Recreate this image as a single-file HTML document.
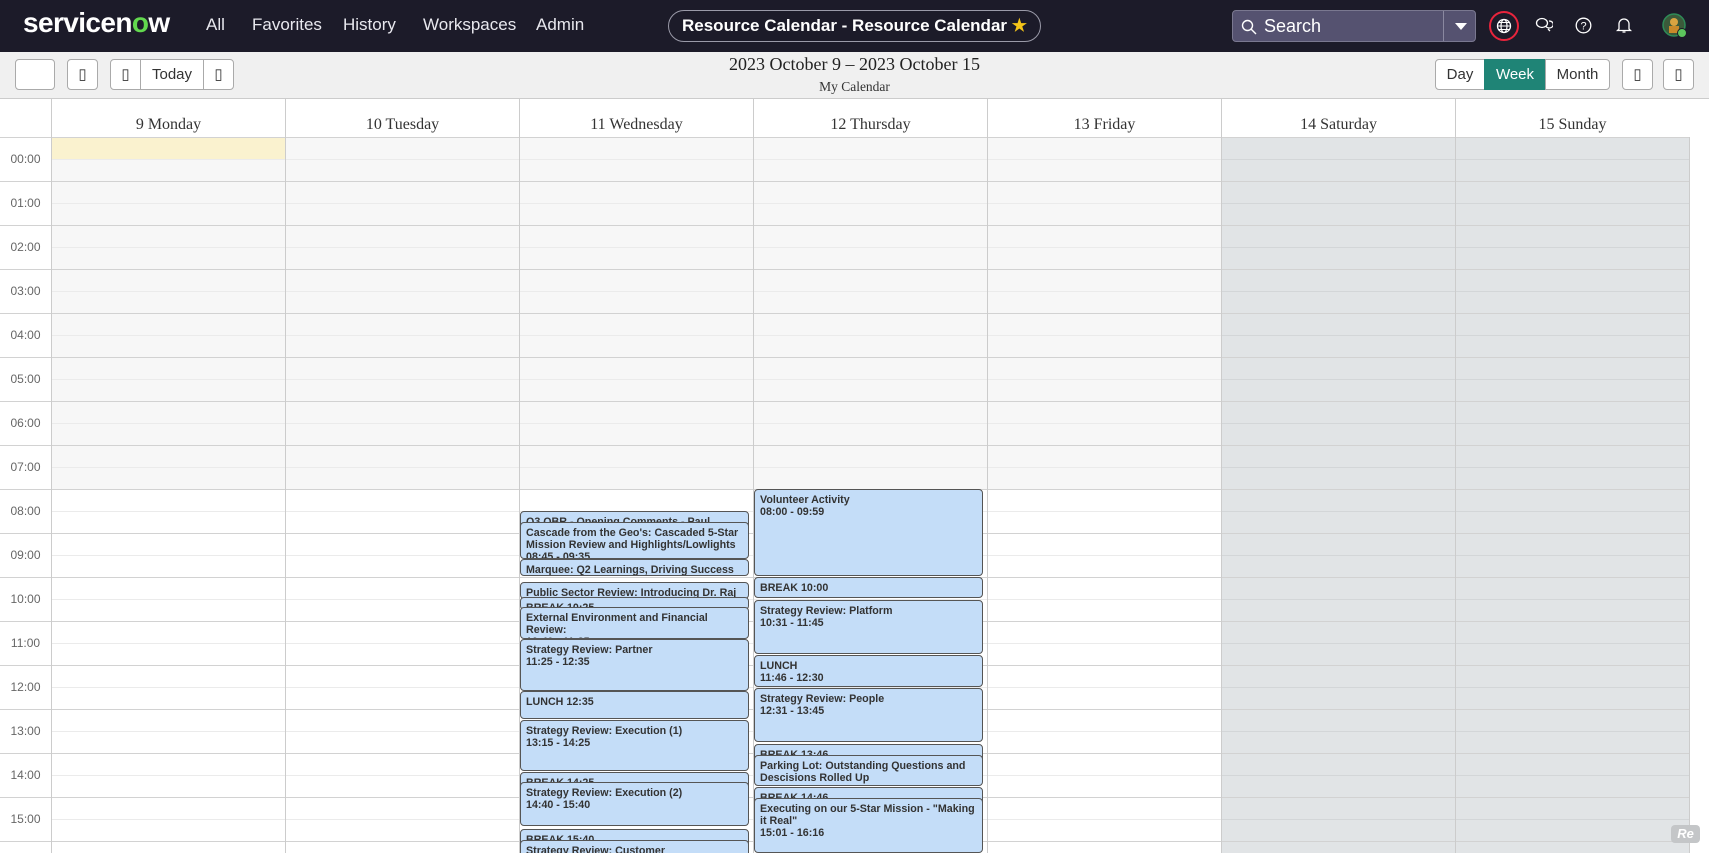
<!DOCTYPE html>
<html style="overflow:hidden"><head><meta charset="utf-8"><style>
*{box-sizing:border-box;margin:0;padding:0}
html,body{width:1709px;height:853px;overflow:hidden}
body{background:#fff;font-family:"Liberation Sans",sans-serif;position:relative}
#wrap{position:absolute;left:0;top:0;width:1709px;height:853px;overflow:hidden}
.hdr{position:absolute;left:0;top:0;width:1709px;height:52px;background:#1c1b29;color:#fff}
.hdr .nav{position:absolute;top:15px;font-size:17px;color:#e8e8ee}
.logo{position:absolute;left:23px;top:7px;font-size:28px;font-weight:bold;letter-spacing:-0.6px;color:#fff}
.pill{position:absolute;left:668px;top:10px;width:373px;height:32px;border:1px solid #9a9aa8;border-radius:16px;text-align:center;font-weight:bold;font-size:17px;line-height:30px}
.search{position:absolute;left:1232px;top:10px;width:244px;height:32px;background:#555270;border:1px solid #7a7890;border-radius:4px}
.tb{position:absolute;left:0;top:52px;width:1709px;height:47px;background:#f0f0f0;border-bottom:1px solid #ccc}
.btn{position:absolute;top:7px;height:31px;border:1px solid #aaa;background:#fff;border-radius:4px;font-size:15px;line-height:29px;text-align:center;color:#333}
.colh{position:absolute;top:99px;height:38px;border-left:1px solid #ccc;font-family:"Liberation Serif",serif;font-size:16px;color:#333;text-align:center;line-height:52px}
.col{position:absolute;top:137px;height:716px;border-left:1px solid #ccc}
.tl{position:absolute;left:0;width:51px;text-align:center;font-size:12px;color:#666}
.ev{position:absolute;background:#c4ddf8;border:1px solid #555;border-radius:4px;padding:4px 4px 4px 5px;font-size:10.7px;font-weight:bold;color:#333;line-height:12px;overflow:hidden}
</style></head><body><div id="wrap">
<div class="hdr">
<div class="logo">servicen<span style="color:#62d84e">o</span>w</div>
<div class="nav" style="left:206px">All</div>
<div class="nav" style="left:252px">Favorites</div>
<div class="nav" style="left:343px">History</div>
<div class="nav" style="left:423px">Workspaces</div>
<div class="nav" style="left:536px">Admin</div>
<div class="pill">Resource Calendar - Resource Calendar <span style="color:#f5c518">★</span></div>
<div class="search">
<svg style="position:absolute;left:8px;top:8px" width="16" height="16" viewBox="0 0 16 16"><circle cx="6.5" cy="6.5" r="5" fill="none" stroke="#fff" stroke-width="1.4"/><path d="M10 10l5 5" stroke="#fff" stroke-width="1.4"/></svg>
<span style="position:absolute;left:31px;top:5px;font-size:18px;color:#fff">Search</span>
<div style="position:absolute;left:210px;top:0;width:1px;height:30px;background:#8a88a0"></div>
<svg style="position:absolute;left:222px;top:12px" width="12" height="8"><path d="M0 0h12L6 7z" fill="#fff"/></svg>
</div>
<svg style="position:absolute;left:1488px;top:10px" width="32" height="32" viewBox="0 0 32 32"><circle cx="16" cy="16" r="14" fill="none" stroke="#e8243c" stroke-width="2"/><circle cx="16" cy="16" r="6.5" fill="none" stroke="#fff" stroke-width="1.3"/><ellipse cx="16" cy="16" rx="3" ry="6.5" fill="none" stroke="#fff" stroke-width="1.2"/><path d="M9.5 16h13M10.5 12.5h11M10.5 19.5h11" stroke="#fff" stroke-width="1.1"/></svg>
<svg style="position:absolute;left:1535px;top:17px" width="18" height="16" viewBox="0 0 18 16"><ellipse cx="7" cy="6" rx="5.5" ry="4.5" fill="none" stroke="#fff" stroke-width="1.3"/><path d="M11 9.5a4 3.5 0 1 0 3 -5.5M13 12l2 2" fill="none" stroke="#fff" stroke-width="1.3"/></svg>
<svg style="position:absolute;left:1575px;top:17px" width="17" height="17" viewBox="0 0 17 17"><circle cx="8.5" cy="8.5" r="7.3" fill="none" stroke="#fff" stroke-width="1.3"/><text x="8.5" y="12.5" font-size="11" font-family="Liberation Sans" fill="#fff" text-anchor="middle">?</text></svg>
<svg style="position:absolute;left:1616px;top:16px" width="16" height="18" viewBox="0 0 16 18"><path d="M3 13V8a5 5 0 0 1 10 0v5l1.5 1.5h-13z" fill="none" stroke="#fff" stroke-width="1.3"/><path d="M6.5 16h3" stroke="#fff" stroke-width="1.3"/></svg>
<svg style="position:absolute;left:1662px;top:13px" width="26" height="26" viewBox="0 0 26 26"><circle cx="12" cy="12" r="11" fill="#3b5a3a" stroke="#2e8b57" stroke-width="1.5"/><circle cx="12" cy="9" r="4" fill="#d9a441"/><rect x="7" y="13" width="10" height="7" fill="#c98a2a"/><circle cx="20" cy="20" r="4.5" fill="#5cc55c" stroke="#1c1b29" stroke-width="1"/></svg>
</div>
<div class="tb">
<div class="btn" style="left:15px;width:40px"></div>
<div class="btn" style="left:67px;width:31px">▯</div>
<div class="btn" style="left:110px;width:31px;border-radius:4px 0 0 4px">▯</div>
<div class="btn" style="left:140px;width:64px;border-radius:0">Today</div>
<div class="btn" style="left:203px;width:31px;border-radius:0 4px 4px 0">▯</div>
<div style="position:absolute;left:0;width:1709px;top:1px;text-align:center;font-family:'Liberation Serif',serif;font-size:18px;color:#222;line-height:22px">2023 October 9 – 2023 October 15</div>
<div style="position:absolute;left:0;width:1709px;top:27px;text-align:center;font-family:'Liberation Serif',serif;font-size:13.5px;color:#333">My Calendar</div>
<div class="btn" style="left:1435px;width:50px;border-radius:4px 0 0 4px">Day</div>
<div class="btn" style="left:1484px;width:62px;border-radius:0;background:#1f8476;border-color:#1f8476;color:#fff">Week</div>
<div class="btn" style="left:1545px;width:65px;border-radius:0 4px 4px 0">Month</div>
<div class="btn" style="left:1622px;width:31px">▯</div>
<div class="btn" style="left:1663px;width:31px">▯</div>
</div>
<div id="cal"></div>
</div>
<script>
var h='';var days=['9 Monday','10 Tuesday','11 Wednesday','12 Thursday','13 Friday','14 Saturday','15 Sunday'];
var W=234,L=51,T=137,H=44;
for(var i=0;i<7;i++){var x=L+i*W;h+='<div class="colh" style="left:'+x+'px;width:'+W+'px">'+days[i]+'</div>';
var we=i>=5;
for(var r=0;r<17;r++){var c=we?'#e1e4e6':(r<8?'#f7f7f7':'#fff');
h+='<div style="position:absolute;left:'+x+'px;top:'+(T+r*H)+'px;width:'+W+'px;height:'+H+'px;background:'+c+';border-top:1px solid #d2d2d2"><div style="position:absolute;left:0;right:0;top:21px;border-top:1px solid '+(we?'#d3d6d8':'#ebebeb')+'"></div></div>';}
h+='<div class="col" style="left:'+x+'px"></div>';}
h+='<div class="col" style="left:'+(L+7*W)+'px"></div>';
h+='<div style="position:absolute;left:'+(L+1)+'px;top:'+(T+1)+'px;width:'+(W-1)+'px;height:21px;background:#faf2cf"></div>';
for(var r=0;r<17;r++){h+='<div style="position:absolute;left:0;width:51px;top:'+(T+r*H)+'px;border-top:1px solid #d2d2d2"></div><div class="tl" style="top:'+(T+r*H+15)+'px">'+(r<10?'0':'')+r+':00</div>';}
function t(s){var p=s.split(':');return T+(+p[0])*H+(+p[1])*H/60;}
function ev(d,a,b,txt){var y=t(a),y2=t(b);h+='<div class="ev" style="left:'+(L+d*W+1)+'px;width:'+(W-5)+'px;top:'+y+'px;height:'+(y2-y)+'px">'+txt+'</div>';}
ev(2,'8:30','9:00','Q3 QBR - Opening Comments - Paul');
ev(2,'8:45','9:35','Cascade from the Geo\'s: Cascaded 5-Star Mission Review and Highlights/Lowlights<br>08:45 - 09:35');
ev(2,'9:36','9:58','Marquee: Q2 Learnings, Driving Success for Q3 - Paul Fipps 09:35');
ev(2,'10:07','10:30','Public Sector Review: Introducing Dr. Raj');
ev(2,'10:27','10:45','BREAK 10:25');
ev(2,'10:41','11:25','External Environment and Financial Review:<br>10:40 - 11:25');
ev(2,'11:25','12:35','Strategy Review: Partner<br>11:25 - 12:35');
ev(2,'12:36','13:14','LUNCH 12:35');
ev(2,'13:15','14:25','Strategy Review: Execution (1)<br>13:15 - 14:25');
ev(2,'14:26','14:50','BREAK 14:25');
ev(2,'14:40','15:40','Strategy Review: Execution (2)<br>14:40 - 15:40');
ev(2,'15:43','16:10','BREAK 15:40');
ev(2,'15:59','17:00','Strategy Review: Customer');
ev(3,'8:00','9:59','Volunteer Activity<br>08:00 - 09:59');
ev(3,'10:00','10:29','BREAK 10:00');
ev(3,'10:32','11:45','Strategy Review: Platform<br>10:31 - 11:45');
ev(3,'11:47','12:30','LUNCH<br>11:46 - 12:30');
ev(3,'12:31','13:45','Strategy Review: People<br>12:31 - 13:45');
ev(3,'13:48','14:15','BREAK 13:46');
ev(3,'14:03','14:45','Parking Lot: Outstanding Questions and Descisions Rolled Up<br>14:01 - 14:45');
ev(3,'14:46','15:15','BREAK 14:46');
ev(3,'15:02','16:17','Executing on our 5-Star Mission - "Making it Real"<br>15:01 - 16:16');
h+='<div style="position:absolute;left:1671px;top:825px;width:29px;height:18px;border-radius:4px;background:#c4c6c8;color:#fff;font-size:13px;font-weight:bold;font-style:italic;text-align:center;line-height:18px">Re</div>';
document.getElementById('cal').innerHTML=h;
</script>
</body></html>
